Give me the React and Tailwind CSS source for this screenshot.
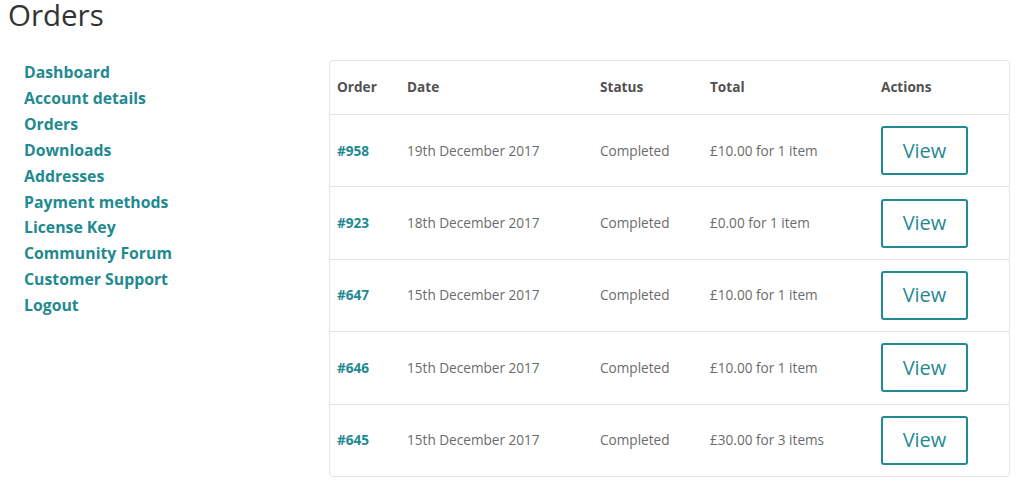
import React from "react";

const nav = [
  "Dashboard",
  "Account details",
  "Orders",
  "Downloads",
  "Addresses",
  "Payment methods",
  "License Key",
  "Community Forum",
  "Customer Support",
  "Logout",
];

const orders = [
  ["#958", "19th December 2017", "Completed", "£10.00 for 1 item"],
  ["#923", "18th December 2017", "Completed", "£0.00 for 1 item"],
  ["#647", "15th December 2017", "Completed", "£10.00 for 1 item"],
  ["#646", "15th December 2017", "Completed", "£10.00 for 1 item"],
  ["#645", "15th December 2017", "Completed", "£30.00 for 3 items"],
];

export default function App() {
  return (
    <div className="w-[1024px] h-[492px] bg-white overflow-hidden font-['Open_Sans',sans-serif]">
      <h1 className="pl-[8px] pt-[1px] text-[29.5px] leading-[28px] text-[#333] font-normal">Orders</h1>
      <div className="flex mt-[30px]">
        <nav className="w-[329px] shrink-0 pl-[24px] pt-[1px] flex flex-col">
          {nav.map((n) => (
            <a
              key={n}
              className="text-[15.8px] leading-[25.9px] font-bold text-[#1f8a91]"
            >
              {n}
            </a>
          ))}
        </nav>
        <div className="w-[681px] shrink-0 mt-[1px] border border-[#e4e4e4] rounded-[4px] text-[13.6px]">
          <div className="grid grid-cols-[70px_193px_110px_171px_1fr] h-[53px] items-center font-bold text-[#515151]">
            <div className="pl-[7px]">Order</div>
            <div className="pl-[7px]">Date</div>
            <div className="pl-[7px]">Status</div>
            <div className="pl-[7px]">Total</div>
            <div className="pl-[7px]">Actions</div>
          </div>
          {orders.map((o) => (
            <div
              key={o[0]}
              className="grid grid-cols-[70px_193px_110px_171px_1fr] h-[72.4px] items-center border-t border-[#e4e4e4] text-[#6b6b6b]"
            >
              <div className="pl-[7px] font-bold text-[#1f8a91]">{o[0]}</div>
              <div className="pl-[7px]">{o[1]}</div>
              <div className="pl-[7px]">{o[2]}</div>
              <div className="pl-[7px]">{o[3]}</div>
              <div className="pl-[7px]">
                <button className="w-[87px] h-[49px] border-2 border-[#1f8a91] rounded-[3px] text-[20px] text-[#1f8a91] bg-white">
                  View
                </button>
              </div>
            </div>
          ))}
        </div>
      </div>
    </div>
  );
}
